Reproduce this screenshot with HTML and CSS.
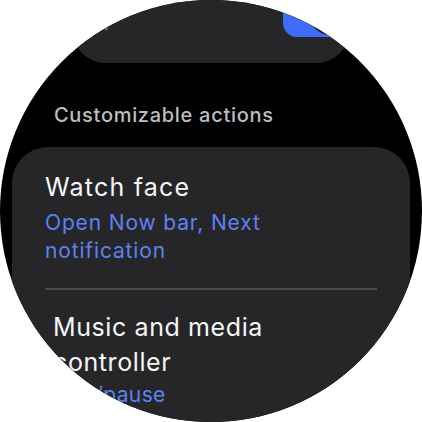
FILE: index.html
```html
<!DOCTYPE html>
<html lang="en">
<head>
<meta charset="utf-8">
<title>Customizable actions</title>
<link rel="stylesheet" href="styles.css">
</head>
<body>
<div class="watch">
  <div class="list">
    <div class="card card-top">
      <div class="top-row">
        <span class="top-sub">Off</span>
        <span class="toggle"><span class="thumb"></span></span>
      </div>
    </div>
    <div class="section-title">Customizable actions</div>
    <div class="card card-main">
      <div class="item">
        <div class="item-title">Watch face</div>
        <div class="item-sub">Open Now bar, Next notification</div>
      </div>
      <div class="divider"></div>
      <div class="item item-second">
        <div class="item-title item-title-lg">Music and media controller</div>
        <div class="item-sub item-sub-second">Play/pause</div>
      </div>
    </div>
  </div>
</div>
</body>
</html>
```

FILE: styles.css
```css
html, body {
  margin: 0;
  padding: 0;
  background: #ffffff;
}

.watch {
  width: 422px;
  height: 422px;
  border-radius: 50%;
  overflow: hidden;
  background: #000000;
  font-family: Inter, "Noto Sans", sans-serif;
}

.list {
  display: flex;
  flex-direction: column;
}

.card {
  background: #262628;
}

.card-top {
  margin: -57px 72px 0 72px;
  height: 120px;
  border-radius: 0 0 34px 34px;
}

.top-row {
  position: relative;
  height: 120px;
}

.top-sub {
  position: absolute;
  left: 8px;
  top: 66px;
  font-size: 21px;
  line-height: 28px;
  color: #5b80f0;
}

.toggle {
  position: absolute;
  left: 211px;
  top: 47px;
  width: 70px;
  height: 47px;
  border-radius: 14px;
  background: #3f6cf8;
}

.thumb {
  position: absolute;
  left: 26px;
  top: 3px;
  width: 42px;
  height: 42px;
  border-radius: 50%;
  background: #262628;
}

.section-title {
  margin: 39px 0 0 54px;
  font-size: 20px;
  line-height: 26px;
  font-weight: 500;
  color: #bdbdbf;
  letter-spacing: 0.7px;
}

.card-main {
  margin: 19px 12px 0 12px;
  border-radius: 36px;
  padding: 23px 33px 40px 33px;
}

.item-title {
  font-size: 25px;
  line-height: 34px;
  color: #f6f6f6;
  letter-spacing: 1.2px;
}

.item-title-lg {
  line-height: 35px;
  padding-right: 40px;
  letter-spacing: 0.6px;
}

.item-sub {
  margin-top: 5px;
  font-size: 21px;
  line-height: 28px;
  color: #5c82f2;
  padding-right: 60px;
  letter-spacing: 0.85px;
}

.item-sub-second {
  margin-top: 1px;
  letter-spacing: 0.4px;
}

.divider {
  height: 2px;
  background: #4a4a4c;
  margin-top: 23px;
}

.item-second {
  padding: 20px 0 0 8px;
}
```
